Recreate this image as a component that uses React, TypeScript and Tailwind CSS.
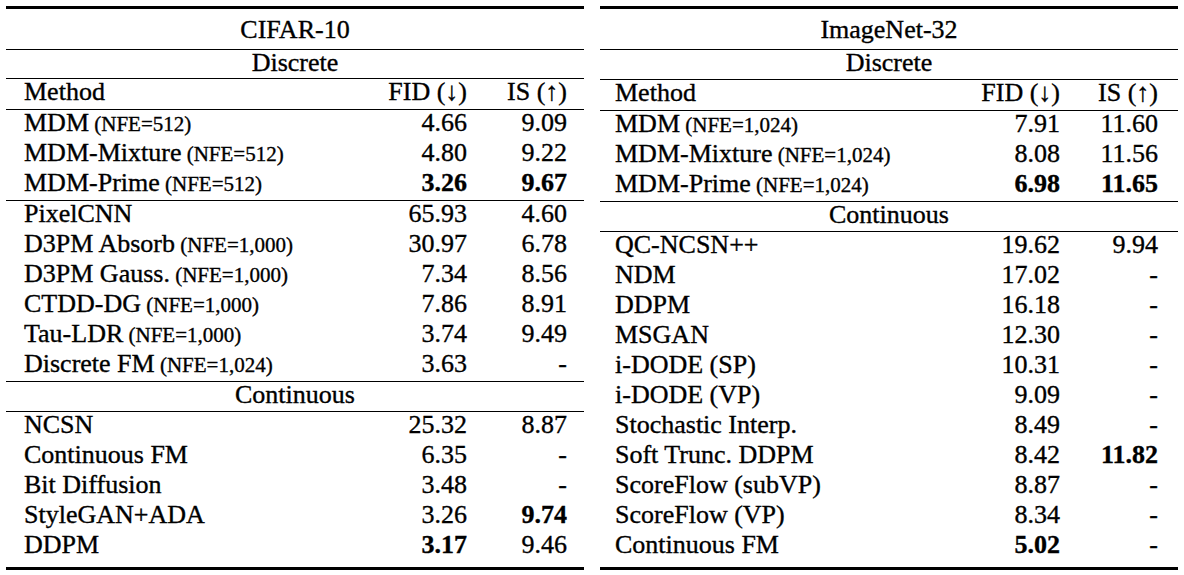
type Row = {
    name: string;
    nfe?: string;
    fid: string;
    is: string;
    boldFid?: boolean;
    boldIs?: boolean;
};

type Section = {
    label?: string;
    rows: Row[];
};

interface ResultTableProps {
    title: string;
    sections: Section[];
    padLeft: string;
    padRight: string;
    isWidth: string;
}

const cifar: Section[] = [
    {
        rows: [
            { name: 'MDM', nfe: '(NFE=512)', fid: '4.66', is: '9.09' },
            { name: 'MDM-Mixture', nfe: '(NFE=512)', fid: '4.80', is: '9.22' },
            { name: 'MDM-Prime', nfe: '(NFE=512)', fid: '3.26', is: '9.67', boldFid: true, boldIs: true },
        ],
    },
    {
        rows: [
            { name: 'PixelCNN', fid: '65.93', is: '4.60' },
            { name: 'D3PM Absorb', nfe: '(NFE=1,000)', fid: '30.97', is: '6.78' },
            { name: 'D3PM Gauss.', nfe: ' (NFE=1,000)', fid: '7.34', is: '8.56' },
            { name: 'CTDD-DG', nfe: '(NFE=1,000)', fid: '7.86', is: '8.91' },
            { name: 'Tau-LDR', nfe: '(NFE=1,000)', fid: '3.74', is: '9.49' },
            { name: 'Discrete FM', nfe: '(NFE=1,024)', fid: '3.63', is: '-' },
        ],
    },
    {
        label: 'Continuous',
        rows: [
            { name: 'NCSN', fid: '25.32', is: '8.87' },
            { name: 'Continuous FM', fid: '6.35', is: '-' },
            { name: 'Bit Diffusion', fid: '3.48', is: '-' },
            { name: 'StyleGAN+ADA', fid: '3.26', is: '9.74', boldIs: true },
            { name: 'DDPM', fid: '3.17', is: '9.46', boldFid: true },
        ],
    },
];

const imagenet: Section[] = [
    {
        rows: [
            { name: 'MDM', nfe: '(NFE=1,024)', fid: '7.91', is: '11.60' },
            { name: 'MDM-Mixture', nfe: '(NFE=1,024)', fid: '8.08', is: '11.56' },
            { name: 'MDM-Prime', nfe: '(NFE=1,024)', fid: '6.98', is: '11.65', boldFid: true, boldIs: true },
        ],
    },
    {
        label: 'Continuous',
        rows: [
            { name: 'QC-NCSN++', fid: '19.62', is: '9.94' },
            { name: 'NDM', fid: '17.02', is: '-' },
            { name: 'DDPM', fid: '16.18', is: '-' },
            { name: 'MSGAN', fid: '12.30', is: '-' },
            { name: 'i-DODE (SP)', fid: '10.31', is: '-' },
            { name: 'i-DODE (VP)', fid: '9.09', is: '-' },
            { name: 'Stochastic Interp.', fid: '8.49', is: '-' },
            { name: 'Soft Trunc. DDPM', fid: '8.42', is: '11.82', boldIs: true },
            { name: 'ScoreFlow (subVP)', fid: '8.87', is: '-' },
            { name: 'ScoreFlow (VP)', fid: '8.34', is: '-' },
            { name: 'Continuous FM', fid: '5.02', is: '-', boldFid: true },
        ],
    },
];

function ResultTable({ title, sections, padLeft, padRight, isWidth }: ResultTableProps) {
    return (
        <div className="w-[578px] flex flex-col border-t-[3px] border-b-[3px] border-black">
            {/* Title */}
            <div className="h-[41px] pt-[8px] border-b border-black text-center leading-[26px]">{title}</div>
            <div className="h-[30px] border-b border-black text-center leading-[26px]">Discrete</div>

            {/* Column header */}
            <div className={`h-[31px] flex items-start border-b border-black leading-[26px] ${padLeft} ${padRight}`}>
                <div className="flex-1">Method</div>
                <div className="text-right">FID (↓)</div>
                <div className={`text-right ${isWidth}`}>IS (↑)</div>
            </div>

            {sections.map((section, si) => (
                <div key={si} className={si < sections.length - 1 ? 'border-b border-black' : ''}>
                    {section.label && (
                        <div className="h-[30px] border-b border-black text-center leading-[26px]">{section.label}</div>
                    )}
                    {section.rows.map((row) => (
                        <div key={row.name} className={`h-[30px] flex items-start leading-[26px] ${padLeft} ${padRight}`}>
                            <div className="flex-1 whitespace-pre">
                                {row.name}
                                {row.nfe && <span className="text-[21px]"> {row.nfe.trim()}</span>}
                            </div>
                            <div className={`text-right ${row.boldFid ? 'font-bold' : ''}`}>{row.fid}</div>
                            <div className={`text-right ${isWidth} ${row.boldIs ? 'font-bold' : ''}`}>{row.is}</div>
                        </div>
                    ))}
                </div>
            ))}

            <div className="flex-1 min-h-[5px]"></div>
        </div>
    );
}

export default function App() {
    return (
        <div className="w-[1184px] h-[575px] bg-white text-black text-[26px] [font-family:'Liberation_Serif','Times_New_Roman',serif] [-webkit-text-stroke:0.35px_black] flex items-stretch gap-[16px] px-[6px] pt-[6px] pb-[5px]">
            <ResultTable title="CIFAR-10" sections={cifar} padLeft="pl-[18px]" padRight="pr-[17px]" isWidth="w-[100px]" />
            <ResultTable title="ImageNet-32" sections={imagenet} padLeft="pl-[15px]" padRight="pr-[20px]" isWidth="w-[98px]" />
        </div>
    );
}
